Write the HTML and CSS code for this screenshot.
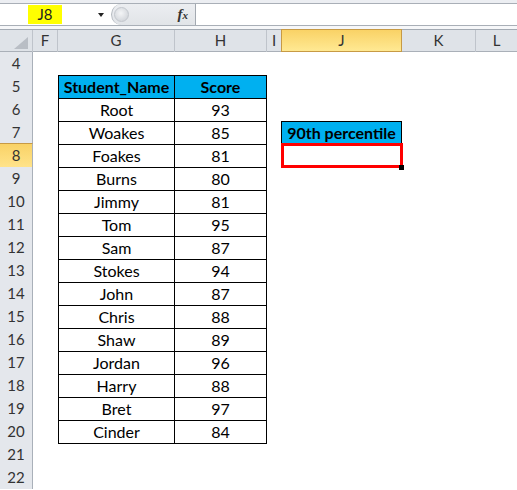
FILE: index.html
```html
<!DOCTYPE html>
<html>
<head>
<meta charset="utf-8">
<link rel="stylesheet" href="styles.css">
</head>
<body>
<div class="topband"></div>
<div class="fbar">
  <div class="namebox"><span class="ref">J8</span><span class="caret"></span></div>
  <div class="fxctl"><span class="knob"></span><span class="fx">f<span class="x">x</span></span></div>
  <div class="finput"></div>
</div>
<div class="fgap"></div>
<div class="sheet">
  <div class="row colhdr">
    <div class="corner"><svg class="tri" width="14" height="12" viewBox="0 0 14 12"><polygon points="14,0 14,12 0,12" fill="#b9bec5"/></svg></div>
    <div class="chd">F</div>
    <div class="chd">G</div>
    <div class="chd">H</div>
    <div class="chd">I</div>
    <div class="chd active">J</div>
    <div class="chd">K</div>
    <div class="chd last">L</div>
  </div>
  <div class="row"><div class="rh">4</div></div>
  <div class="row"><div class="rh">5</div><div class="c-g tc th">Student_Name</div><div class="c-h tc th">Score</div></div>
  <div class="row"><div class="rh">6</div><div class="c-g tc">Root</div><div class="c-h tc">93</div></div>
  <div class="row"><div class="rh">7</div><div class="c-g tc">Woakes</div><div class="c-h tc">85</div><div class="c-j pct">90th percentile</div></div>
  <div class="row"><div class="rh active">8</div><div class="c-g tc">Foakes</div><div class="c-h tc">81</div><div class="c-j sel"><span class="handle"></span></div></div>
  <div class="row"><div class="rh">9</div><div class="c-g tc">Burns</div><div class="c-h tc">80</div></div>
  <div class="row"><div class="rh">10</div><div class="c-g tc">Jimmy</div><div class="c-h tc">81</div></div>
  <div class="row"><div class="rh">11</div><div class="c-g tc">Tom</div><div class="c-h tc">95</div></div>
  <div class="row"><div class="rh">12</div><div class="c-g tc">Sam</div><div class="c-h tc">87</div></div>
  <div class="row"><div class="rh">13</div><div class="c-g tc">Stokes</div><div class="c-h tc">94</div></div>
  <div class="row"><div class="rh">14</div><div class="c-g tc">John</div><div class="c-h tc">87</div></div>
  <div class="row"><div class="rh">15</div><div class="c-g tc">Chris</div><div class="c-h tc">88</div></div>
  <div class="row"><div class="rh">16</div><div class="c-g tc">Shaw</div><div class="c-h tc">89</div></div>
  <div class="row"><div class="rh">17</div><div class="c-g tc">Jordan</div><div class="c-h tc">96</div></div>
  <div class="row"><div class="rh">18</div><div class="c-g tc">Harry</div><div class="c-h tc">88</div></div>
  <div class="row"><div class="rh">19</div><div class="c-g tc">Bret</div><div class="c-h tc">97</div></div>
  <div class="row"><div class="rh">20</div><div class="c-g tc">Cinder</div><div class="c-h tc">84</div></div>
  <div class="row"><div class="rh">21</div></div>
  <div class="row"><div class="rh">22</div></div>
</div>
</body>
</html>
```

FILE: styles.css
```css
html, body {
  margin: 0;
  padding: 0;
  background: #ffffff;
  overflow: hidden;
}
body {
  font-family: Lato, "Liberation Sans", sans-serif;
  color: #000;
}
.topband {
  height: 3px;
  background: #eceef2;
}
.fbar {
  display: flex;
  height: 23px;
  box-sizing: border-box;
  border-top: 1px solid #a9afb7;
  border-bottom: 1px solid #a9afb7;
  background: #ffffff;
}
.namebox {
  width: 111px;
  display: flex;
  align-items: center;
  padding-left: 28px;
  box-sizing: border-box;
}
.ref {
  width: 34px;
  height: 19px;
  background: #ffff00;
  text-align: center;
  font-size: 15px;
  line-height: 19px;
  color: #222;
}
.caret {
  margin-left: auto;
  margin-right: 7px;
  width: 0;
  height: 0;
  border-top: 4px solid #222;
  border-left: 3.5px solid transparent;
  border-right: 3.5px solid transparent;
}
.fxctl {
  width: 85px;
  display: flex;
  align-items: center;
  background: linear-gradient(#eceef1, #e1e4e8);
  border-left: 1px solid #b3b8bf;
  border-right: 1px solid #a3a9b1;
  border-radius: 11px 0 0 11px;
  box-sizing: border-box;
}
.knob {
  width: 13px;
  height: 13px;
  margin-left: 2px;
  border-radius: 50%;
  background: radial-gradient(circle at 45% 40%, #f4f5f7, #c9cdd3);
  border: 1px solid #c3c7cd;
}
.fx {
  margin-left: auto;
  margin-right: 7px;
  font-family: "Liberation Serif", serif;
  font-style: italic;
  font-weight: bold;
  font-size: 15px;
  color: #333;
}
.fx .x {
  font-size: 11px;
}
.finput {
  flex: 1;
}
.fgap {
  height: 3px;
  background: #f6f7f9;
}
.row {
  display: grid;
  grid-template-columns: 33px 25px 117px 92px 15px 120px 74px 1fr;
  height: 23px;
}
.colhdr {
  height: 23px;
  background: #dfe3e8;
  border-top: 1px solid #a3aab3;
  border-bottom: 1px solid #aab0b8;
  box-sizing: border-box;
}
.corner {
  position: relative;
  border-right: 1px solid #bfc4cb;
}
.tri {
  position: absolute;
  right: 4px;
  bottom: 3px;
}
.chd {
  border-right: 1px solid #bfc4cb;
  text-align: center;
  font-size: 15px;
  line-height: 21px;
  color: #333;
}
.chd.last {
  border-right: none;
}
.chd.active {
  background: linear-gradient(#f9d266, #ffe993);
  border: 1px solid #c79a45;
  margin-top: -1px;
  margin-left: -1px;
  line-height: 21px;
}
.rh {
  grid-column: 1;
  background: #e4e7ec;
  border-right: 1px solid #a9b0b9;
  border-bottom: 1px solid #cfd3d8;
  text-align: center;
  font-size: 15px;
  line-height: 23px;
  color: #333;
}
.rh.active {
  background: linear-gradient(#f9d266, #ffe38a);
  border-top: 1px solid #c79a45;
  border-bottom: 1px solid #c79a45;
  margin-top: -1px;
  line-height: 23px;
}
.c-g { grid-column: 3; }
.c-h { grid-column: 4; }
.c-j { grid-column: 6; }
.tc {
  border-bottom: 1px solid #000;
  border-right: 1px solid #000;
  text-align: center;
  font-size: 16px;
  line-height: 23px;
}
.c-g.tc {
  border-left: 1px solid #000;
}
.th {
  background: #00b0f0;
  border-top: 1px solid #000;
  font-weight: bold;
  line-height: 22px;
}
.pct {
  background: #00b0f0;
  border: 1px solid #000;
  margin-left: -1px;
  font-weight: bold;
  font-size: 16px;
  line-height: 22px;
  text-align: center;
}
.sel {
  position: relative;
}
.sel::before {
  content: "";
  position: absolute;
  top: -1px;
  left: -1px;
  right: -1px;
  bottom: 0;
  border: 3px solid #ff0000;
}
.handle {
  position: absolute;
  right: -2px;
  bottom: -2px;
  width: 5px;
  height: 5px;
  background: #000;
  z-index: 2;
}
```
